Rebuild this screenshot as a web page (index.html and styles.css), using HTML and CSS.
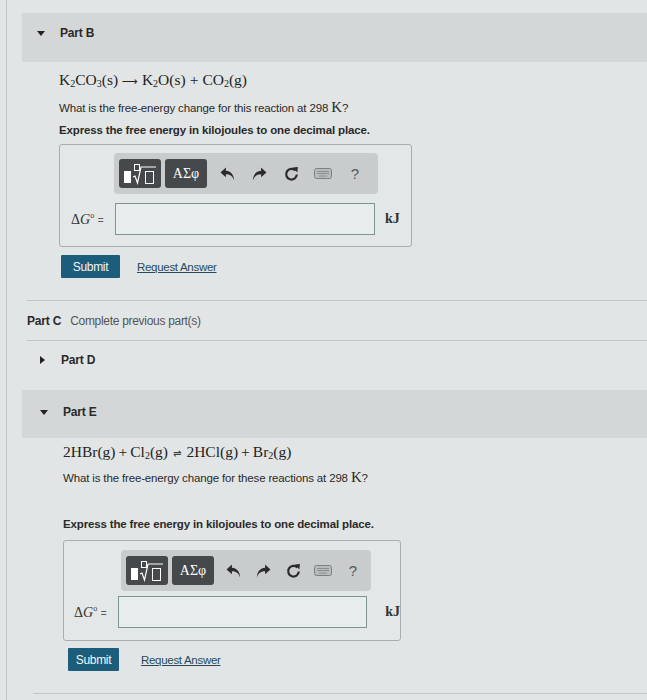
FILE: index.html
```html
<!DOCTYPE html>
<html lang="en">
<head>
<meta charset="utf-8">
<title>Parts</title>
<link rel="stylesheet" href="styles.css">
</head>
<body>
<div class="page">
  <div class="top-gap"></div>

  <section class="part part-b">
    <div class="part-header">
      <span class="caret caret-down"></span>
      <span class="part-title">Part B</span>
    </div>
    <div class="part-body">
      <div class="equation">K<sub>2</sub>CO<sub>3</sub>(s)<span class="arrow">⟶</span>K<sub>2</sub>O(s)<span class="op">+</span>CO<sub>2</sub>(g)</div>
      <p class="question">What is the free-energy change for this reaction at 298 <span class="mathk">K</span>?</p>
      <p class="instruction">Express the free energy in kilojoules to one decimal place.</p>
      <div class="answer-box box-b">
        <div class="toolbar">
          <span class="tool-btn"><svg width="34" height="22" viewBox="0 0 34 22"><rect x="1" y="8" width="7" height="12" fill="#fff"/><rect x="11.5" y="1.5" width="5" height="6" fill="none" stroke="#fff" stroke-width="1"/><path d="M10 14 L12 13 L14.5 20 L18 4 H33" fill="none" stroke="#fff" stroke-width="1.2"/><rect x="22.5" y="8.5" width="8" height="12" fill="none" stroke="#fff" stroke-width="1"/></svg></span>
          <span class="tool-btn greek">ΑΣφ</span>
          <span class="tool-icon"><svg width="15" height="14" viewBox="0 0 14 13"><path d="M5.5 0.5 L0.5 5 L5.5 9.5 V6.8 C9 6.8 11.5 8 13.2 12.5 C13 7 10 3.6 5.5 3.4 Z" fill="#2a2b2d"/></svg></span>
          <span class="tool-icon"><svg width="15" height="14" viewBox="0 0 14 13"><path d="M8.5 0.5 L13.5 5 L8.5 9.5 V6.8 C5 6.8 2.5 8 0.8 12.5 C1 7 4 3.6 8.5 3.4 Z" fill="#2a2b2d"/></svg></span>
          <span class="tool-icon"><svg width="15" height="16" viewBox="0 0 14 15"><path d="M10.6 4.2 A5 5 0 1 0 12 8" fill="none" stroke="#2a2b2d" stroke-width="2.1"/><path d="M8 1.5 L13 1 L12.5 6 Z" fill="#2a2b2d"/></svg></span>
          <span class="tool-icon"><svg width="18" height="11" viewBox="0 0 18 11"><rect x="0.5" y="0.5" width="17" height="10" rx="2" fill="#b9bcbd" stroke="#7d8083"/><path d="M3 3.5 H15 M3 5.5 H15 M5 8 H13" stroke="#8b8e91" stroke-width="1"/></svg></span>
          <span class="tool-icon help">?</span>
        </div>
        <div class="answer-row">
          <span class="label"><span class="delta">Δ</span><span class="g">G</span><sup>o</sup> <span class="eq">=</span></span>
          <span class="input"></span>
          <span class="unit">kJ</span>
        </div>
      </div>
      <div class="actions">
        <button class="submit" type="button">Submit</button>
        <a class="request" href="#">Request Answer</a>
      </div>
    </div>
  </section>

  <div class="part-row part-c">
    <span class="part-title">Part C</span>
    <span class="muted">Complete previous part(s)</span>
  </div>

  <div class="part-row part-d">
    <span class="caret caret-right"></span>
    <span class="part-title">Part D</span>
  </div>

  <section class="part part-e">
    <div class="part-header">
      <span class="caret caret-down"></span>
      <span class="part-title">Part E</span>
    </div>
    <div class="part-body">
      <div class="equation">2HBr(g)<span class="op">+</span>Cl<sub>2</sub>(g)<span class="arrow eqm">⇌</span>2HCl(g)<span class="op">+</span>Br<sub>2</sub>(g)</div>
      <p class="question">What is the free-energy change for these reactions at 298 <span class="mathk">K</span>?</p>
      <p class="instruction">Express the free energy in kilojoules to one decimal place.</p>
      <div class="answer-box box-e">
        <div class="toolbar">
          <span class="tool-btn"><svg width="34" height="22" viewBox="0 0 34 22"><rect x="1" y="8" width="7" height="12" fill="#fff"/><rect x="11.5" y="1.5" width="5" height="6" fill="none" stroke="#fff" stroke-width="1"/><path d="M10 14 L12 13 L14.5 20 L18 4 H33" fill="none" stroke="#fff" stroke-width="1.2"/><rect x="22.5" y="8.5" width="8" height="12" fill="none" stroke="#fff" stroke-width="1"/></svg></span>
          <span class="tool-btn greek">ΑΣφ</span>
          <span class="tool-icon"><svg width="15" height="14" viewBox="0 0 14 13"><path d="M5.5 0.5 L0.5 5 L5.5 9.5 V6.8 C9 6.8 11.5 8 13.2 12.5 C13 7 10 3.6 5.5 3.4 Z" fill="#2a2b2d"/></svg></span>
          <span class="tool-icon"><svg width="15" height="14" viewBox="0 0 14 13"><path d="M8.5 0.5 L13.5 5 L8.5 9.5 V6.8 C5 6.8 2.5 8 0.8 12.5 C1 7 4 3.6 8.5 3.4 Z" fill="#2a2b2d"/></svg></span>
          <span class="tool-icon"><svg width="15" height="16" viewBox="0 0 14 15"><path d="M10.6 4.2 A5 5 0 1 0 12 8" fill="none" stroke="#2a2b2d" stroke-width="2.1"/><path d="M8 1.5 L13 1 L12.5 6 Z" fill="#2a2b2d"/></svg></span>
          <span class="tool-icon"><svg width="18" height="11" viewBox="0 0 18 11"><rect x="0.5" y="0.5" width="17" height="10" rx="2" fill="#b9bcbd" stroke="#7d8083"/><path d="M3 3.5 H15 M3 5.5 H15 M5 8 H13" stroke="#8b8e91" stroke-width="1"/></svg></span>
          <span class="tool-icon help">?</span>
        </div>
        <div class="answer-row">
          <span class="label"><span class="delta">Δ</span><span class="g">G</span><sup>o</sup> <span class="eq">=</span></span>
          <span class="input"></span>
          <span class="unit">kJ</span>
        </div>
      </div>
      <div class="actions">
        <button class="submit" type="button">Submit</button>
        <a class="request" href="#">Request Answer</a>
      </div>
    </div>
  </section>
  <div class="bottom-rule"></div>
</div>
</body>
</html>
```

FILE: styles.css
```css
* { box-sizing: border-box; }

html, body {
  margin: 0;
  padding: 0;
  background: #e2e5e5;
}

body {
  font-family: "Liberation Sans", Arial, sans-serif;
  color: #222;
  font-size: 12px;
}

.page {
  margin-left: 6px;
  border-left: 1px solid #c4c8c8;
  min-height: 700px;
  background: #e2e5e5;
}

.top-gap { height: 13px; }

.part-header {
  display: flex;
  align-items: center;
  height: 49px;
  background: #d4d7d7;
}

.part-b .part-header {
  margin-left: 15px;
  padding-left: 15px;
  align-items: flex-start;
  padding-top: 13px;
  line-height: 14px;
}
.part-b .part-header .caret { margin-top: 5px; }
.part-e .part-header { margin-left: 15px; padding-left: 18px; height: 48px; padding-bottom: 4px; }

.caret {
  display: inline-block;
  width: 0;
  height: 0;
}
.caret-down {
  border-left: 4px solid transparent;
  border-right: 4px solid transparent;
  border-top: 5px solid #222;
  margin-right: 15px;
}
.caret-right {
  border-top: 4px solid transparent;
  border-bottom: 4px solid transparent;
  border-left: 5px solid #222;
  margin-right: 16px;
}

.part-title {
  font-size: 12px;
  font-weight: bold;
  color: #2a2a2a;
  letter-spacing: -0.2px;
}

.part-body p { margin: 0; }

.part-b .part-body { padding-left: 52px; }
.part-e .part-body { padding-left: 56px; }

.equation {
  height: 20px;
  font-family: "Liberation Serif", "Times New Roman", serif;
  font-size: 15.5px;
  line-height: 20px;
  color: #222;
  white-space: nowrap;
}
.equation sub { font-size: 10px; vertical-align: -2px; line-height: 0; }
.equation .arrow {
  margin: 0 4px;
  font-family: "DejaVu Sans", sans-serif;
  font-size: 11px;
  line-height: 0;
}
.equation .eqm { margin: 0 5px; font-size: 10px; }
.equation .op { margin: 0 3px; }
.part-b .equation .op { margin: 0 4px; }

.part-b .equation { margin-top: 8px; }
.part-e .equation { margin-top: 4px; }

.question {
  line-height: 16px;
  font-size: 11.5px;
  color: #2a2a2a;
  letter-spacing: -0.15px;
}
.mathk {
  font-family: "Liberation Serif", "Times New Roman", serif;
  font-size: 15px;
}
.part-b .question { margin-top: 9px; }
.part-e .question { margin-top: 7px; }

.instruction {
  line-height: 16px;
  font-size: 11.5px;
  font-weight: bold;
  color: #2a2a2a;
  letter-spacing: -0.15px;
}
.part-b .instruction { margin-top: 6px; }
.part-e .instruction { margin-top: 30px; }

.answer-box {
  border: 1px solid #a9adad;
  border-radius: 3px;
  background: #e4e7e7;
}
.box-b { width: 353px; height: 103px; margin-top: 6px; padding: 8px 0 0 11px; }
.box-e { width: 338px; height: 101px; margin-top: 8px; padding: 9px 0 0 10px; }

.toolbar {
  display: flex;
  align-items: center;
  height: 41px;
  padding-left: 5px;
  background: #c9cccc;
  border-radius: 4px;
}
.box-b .toolbar { margin-left: 43px; width: 264px; }
.box-e .toolbar { margin-left: 47px; width: 250px; }

.tool-btn {
  display: flex;
  align-items: center;
  justify-content: center;
  width: 42px;
  height: 29px;
  margin-right: 4px;
  background: #46494c;
  border-radius: 3px;
  color: #fff;
}
.greek {
  font-family: "Liberation Serif", "Times New Roman", serif;
  font-size: 14px;
}

.tool-icon {
  display: flex;
  align-items: center;
  justify-content: center;
  width: 32px;
  height: 29px;
}
.tool-icon:first-of-type { margin-left: -2px; }
.help {
  font-size: 15px;
  color: #555a5e;
}
.box-e .tool-icon { width: 30px; }

.answer-row {
  display: flex;
  align-items: center;
}
.box-b .answer-row { margin-top: 9px; }
.box-e .answer-row { margin-top: 5px; }

.label {
  font-family: "Liberation Serif", "Times New Roman", serif;
  font-size: 14px;
  color: #333;
  white-space: nowrap;
}
.box-b .label { width: 44px; }
.box-e .label { width: 45px; }
.label .g { font-style: italic; }
.label sup { font-size: 8px; vertical-align: 6px; }
.label .eq {
  font-family: "Liberation Sans", Arial, sans-serif;
  font-size: 10px;
  color: #555;
}

.input {
  display: block;
  height: 32px;
  border: 1px solid #7d9494;
  background: #e9ecec;
}
.box-b .input { width: 260px; }
.box-e .input { width: 255px; }

.unit {
  font-family: "Liberation Serif", "Times New Roman", serif;
  font-weight: bold;
  font-size: 14px;
  color: #333;
}
.box-b .unit { margin-left: 10px; }
.box-e .unit { margin-left: 18px; }

.actions {
  display: flex;
  align-items: center;
}
.part-b .actions { margin-top: 8px; padding-left: 2px; }
.part-e .actions { margin-top: 7px; padding-left: 5px; }

.submit {
  height: 23px;
  border: none;
  border-radius: 1px;
  background: #1b5d7b;
  color: #f2f5f6;
  font-family: "Liberation Sans", Arial, sans-serif;
  font-size: 12px;
  padding: 0;
  letter-spacing: -0.3px;
}
.part-b .submit { width: 59px; }
.part-e .submit { width: 51px; }

.request {
  color: #274b5c;
  font-size: 11.5px;
  text-decoration: underline;
  letter-spacing: -0.3px;
}
.part-b .request { margin-left: 17px; }
.part-e .request { margin-left: 22px; }

.part-row {
  display: flex;
  align-items: center;
}
.part-c {
  margin-top: 22px;
  margin-left: 20px;
  border-top: 1px solid #c2c6c6;
  border-bottom: 1px solid #c2c6c6;
  height: 41px;
}
.part-c .muted {
  margin-left: 9px;
  color: #555;
  font-size: 12px;
  letter-spacing: -0.3px;
}
.part-d {
  height: 49px;
  padding-left: 33px;
  align-items: flex-start;
  padding-top: 12px;
  line-height: 14px;
}
.part-d .caret { margin-top: 3px; }

.bottom-rule {
  margin-top: 22px;
  margin-left: 26px;
  border-top: 1px solid #c2c6c6;
}
```
